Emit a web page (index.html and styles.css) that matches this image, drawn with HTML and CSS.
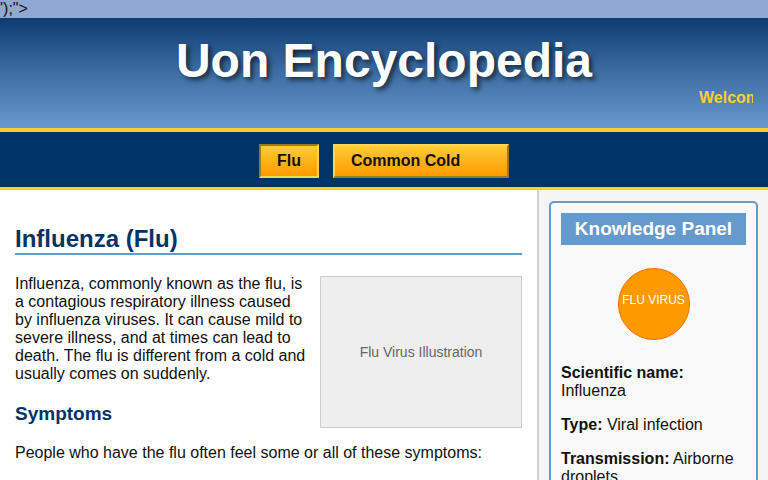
FILE: index.html
```html
<!DOCTYPE html>
<html lang="en">
<head>
<meta charset="utf-8">
<title>Uon Encyclopedia</title>
<link rel="stylesheet" href="styles.css">
</head>
<body>
<div class="stray">');"&gt;</div>
<header class="site-header">
  <h1 class="site-title">Uon Encyclopedia</h1>
  <div class="ticker"><span class="ticker-text">Welcome to Uon Encyclopedia - your trusted source of health knowledge</span></div>
</header>
<nav class="topnav">
  <a class="nav-btn active" href="#">Flu</a>
  <a class="nav-btn wide" href="#">Common Cold</a>
</nav>
<div class="layout">
  <main class="article">
    <h2 class="article-title">Influenza (Flu)</h2>
    <div class="figure">Flu Virus Illustration</div>
    <p>Influenza, commonly known as the flu, is a contagious respiratory illness caused by influenza viruses. It can cause mild to severe illness, and at times can lead to death. The flu is different from a cold and usually comes on suddenly.</p>
    <h3 class="section-title">Symptoms</h3>
    <p>People who have the flu often feel some or all of these symptoms:</p>
  </main>
  <aside class="sidebar">
    <div class="panel">
      <h3 class="panel-title">Knowledge Panel</h3>
      <div class="virus">FLU VIRUS</div>
      <p class="fact"><strong>Scientific name:</strong> Influenza</p>
      <p class="fact"><strong>Type:</strong> Viral infection</p>
      <p class="fact"><strong>Transmission:</strong> Airborne droplets</p>
      <p class="fact"><strong>Incubation:</strong> 1-4 days</p>
    </div>
  </aside>
</div>
</body>
</html>
```
FILE: styles.css
```css
html, body {
  margin: 0;
  padding: 0;
}
body {
  background: #91a8d4;
  font-family: "Liberation Sans", Arial, sans-serif;
  font-size: 16px;
  color: #111;
  height: 480px;
  overflow: hidden;
}
.stray {
  height: 18px;
  line-height: 18px;
  color: #111;
}
.site-header {
  background: linear-gradient(to bottom, #0e3c70 0%, #3e6ea4 50%, #6699cc 100%);
  padding: 15px 15px 22px;
  border-bottom: 4px solid #ffcc33;
}
.site-title {
  margin: 0;
  text-align: center;
  color: #fff;
  font-size: 48px;
  font-weight: bold;
  line-height: 55px;
  text-shadow: 3px 3px 5px rgba(0, 0, 0, 0.6);
}
.ticker {
  overflow: hidden;
  white-space: nowrap;
  height: 18px;
  line-height: 20px;
}
.ticker-text {
  display: inline-block;
  padding-left: 684px;
  color: #ffcc33;
  font-weight: bold;
}
.topnav {
  background: #003366;
  display: flex;
  justify-content: center;
  gap: 14px;
  padding: 12px 0 9px;
  border-bottom: 3px solid #ffcc33;
}
.nav-btn {
  display: block;
  height: 34px;
  box-sizing: border-box;
  padding: 6px 16px;
  line-height: 18px;
  font-weight: bold;
  color: #111;
  text-decoration: none;
  background: linear-gradient(to bottom, #ffcc33, #ff9900);
  border: 2px solid;
  border-color: #ffd750 #9c7a20 #9c7a20 #ffd750;
}
.nav-btn.active {
  border-color: #9c7a20 #ffd750 #ffd750 #9c7a20;
}
.nav-btn.wide {
  width: 176px;
}
.layout {
  display: grid;
  grid-template-columns: 537px 1fr;
  background: #fff;
  min-height: 290px;
}
.article {
  padding: 15px;
  background: #fff;
}
.article-title {
  margin: 20px 0;
  font-size: 24px;
  color: #003366;
  border-bottom: 2px solid #6699cc;
}
.article p {
  margin: 16px 0;
  line-height: 18px;
}
.figure {
  float: right;
  width: 200px;
  height: 150px;
  margin: 1px 0 10px 10px;
  background: #eeeeee;
  border: 1px solid #cccccc;
  color: #666;
  font-size: 14px;
  display: flex;
  align-items: center;
  justify-content: center;
}
.section-title {
  font-size: 19px;
  color: #003366;
  margin: 20px 0 19px;
}
.sidebar {
  background: #f5f5f5;
  border-left: 2px solid #d0d0d0;
  padding: 11px 10px 10px;
}
.panel {
  background: #f9f9f9;
  border: 2px solid #6699cc;
  border-radius: 5px;
  padding: 10px;
}
.panel-title {
  margin: 0;
  background: #6699cc;
  color: #fff;
  text-align: center;
  font-size: 19px;
  line-height: 22px;
  padding: 5px;
}
.virus {
  width: 70px;
  height: 70px;
  margin: 23px auto 24px;
  border-radius: 50%;
  background: #ff9900;
  border: 1px solid #ff6a00;
  color: #fff;
  font-size: 12px;
  text-align: center;
  line-height: 62px;
}
.fact {
  margin: 16px 0;
  line-height: 18px;
}
```
